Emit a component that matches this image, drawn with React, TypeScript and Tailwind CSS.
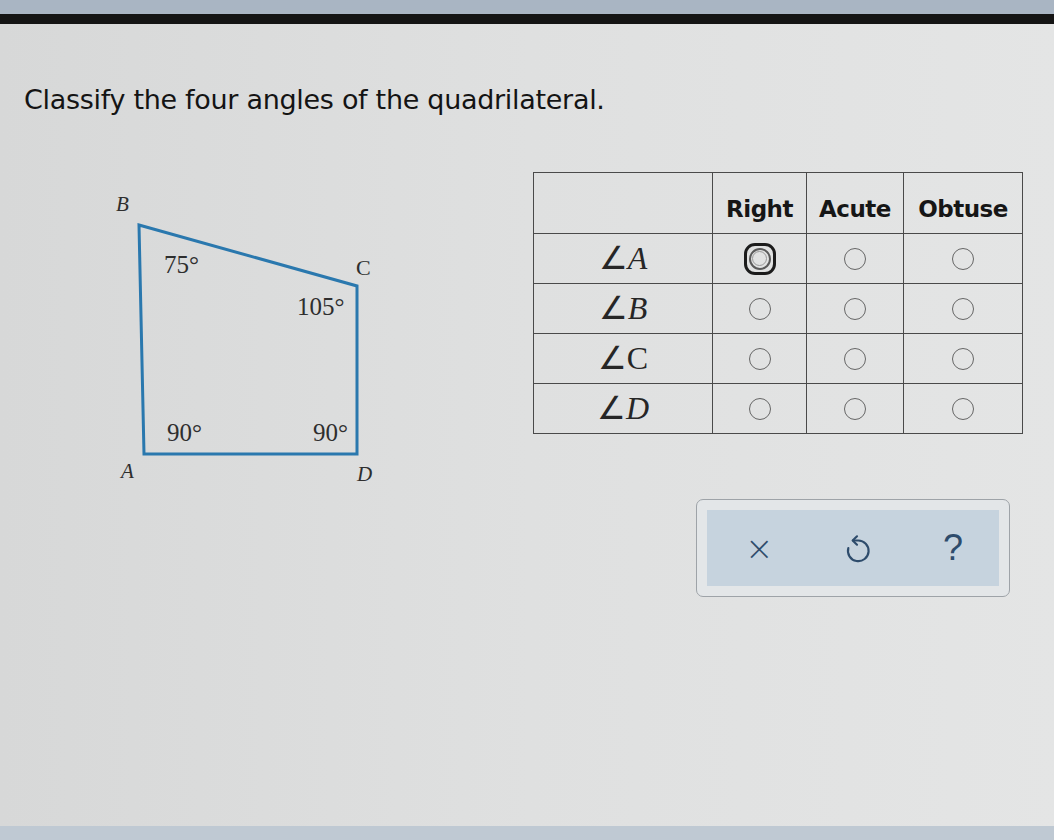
import React from 'react';

const rows = ['A', 'B', 'C', 'D'];

function Radio({ selected }: { selected?: boolean }) {
  if (selected) {
    return (
      <div className="mx-auto w-[32px] h-[32px] rounded-[11px] border-[3px] border-[#1c1c1c] flex items-center justify-center">
        <div className="w-[22px] h-[22px] rounded-full border-[2px] border-[#5a5a5a] flex items-center justify-center">
          <div className="w-[15px] h-[15px] rounded-full border border-[#9a9a9a]" />
        </div>
      </div>
    );
  }
  return <div className="mx-auto w-[22px] h-[22px] rounded-full border-[1.5px] border-[#666]" />;
}

function Figure() {
  return (
    <svg width="300" height="300" viewBox="100 190 300 300" className="shrink-0">
      <polygon
        points="139,228 357,289 357,457 144,457"
        fill="none"
        stroke="#2a78ae"
        strokeWidth="3"
        strokeLinejoin="miter"
      />
      <g fontFamily="'Liberation Serif', serif" fill="#2e2e2e">
        <text x="116" y="214" fontSize="21" fontStyle="italic">B</text>
        <text x="356" y="278" fontSize="22">C</text>
        <text x="121" y="481" fontSize="21" fontStyle="italic">A</text>
        <text x="357" y="484" fontSize="21" fontStyle="italic">D</text>
        <text x="164" y="276" fontSize="25">75°</text>
        <text x="297" y="318" fontSize="25">105°</text>
        <text x="167" y="444" fontSize="25">90°</text>
        <text x="313" y="444" fontSize="25">90°</text>
      </g>
    </svg>
  );
}

function UndoIcon() {
  return (
    <svg width="40" height="40" viewBox="0 0 24 24" fill="none" stroke="#2e4c6c" strokeWidth="1.3" strokeLinecap="round" strokeLinejoin="round">
      <path d="M9 7.5 H12 A6.2 6.2 0 1 1 6.2 12" />
      <path d="M11.4 5 L8.8 7.5 L11.4 10" />
    </svg>
  );
}

export default function App() {
  return (
    <div
      className="w-[1054px] h-[840px] overflow-hidden flex flex-col bg-gradient-to-r from-[#d7d8d8] via-[#dfe0e0] to-[#e4e5e5]"
      style={{ fontFamily: "'DejaVu Sans', Verdana, sans-serif" }}
    >
      <div className="h-[14px] bg-[#a9b5c3] shrink-0" />
      <div className="h-[10px] bg-[#141414] shrink-0" />

      <div className="flex-1 px-[24px]">
        <h1 className="mt-[60px] text-[27px] leading-[32px] text-[#141414] tracking-[-0.3px]">
          Classify the four angles of the quadrilateral.
        </h1>

        <div className="flex items-start mt-[56px]">
          <div className="ml-[76px] mt-[15px]">
            <Figure />
          </div>

          <div className="ml-[133px] flex flex-col">
            <table className="border-collapse border-[1.5px] border-[#3e3e3e] text-[#161616]">
              <thead>
                <tr className="h-[61px]">
                  <th className="w-[179px] border border-[#4a4a4a]" />
                  <th className="w-[94px] border border-[#4a4a4a] align-middle pt-[12px] text-[23px] font-bold tracking-[-0.5px]">Right</th>
                  <th className="w-[97px] border border-[#4a4a4a] align-middle pt-[12px] text-[23px] font-bold tracking-[-0.5px]">Acute</th>
                  <th className="w-[119px] border border-[#4a4a4a] align-middle pt-[12px] text-[23px] font-bold tracking-[-0.5px]">Obtuse</th>
                </tr>
              </thead>
              <tbody>
                {rows.map((r, i) => (
                  <tr key={r} className="h-[50px]">
                    <td className="border border-[#4a4a4a] text-center">
                      <span className="text-[32px] leading-none text-[#262626]" style={{ fontFamily: "'Liberation Serif', serif" }}>
                        ∠<span className={r === 'C' ? '' : 'italic'}>{r}</span>
                      </span>
                    </td>
                    <td className="border border-[#4a4a4a]"><Radio selected={i === 0} /></td>
                    <td className="border border-[#4a4a4a]"><Radio /></td>
                    <td className="border border-[#4a4a4a]"><Radio /></td>
                  </tr>
                ))}
              </tbody>
            </table>

            <div className="ml-[163px] mt-[65px] w-[314px] h-[98px] rounded-[7px] border-[1.5px] border-[#9ea3a8] bg-[#e3e6e8] p-[10px]">
              <div className="h-full bg-[#c6d3de] flex items-center justify-between pl-[38px] pr-[36px]">
                <span className="text-[34px] leading-none text-[#2e4c6c] font-light" style={{ fontFamily: "'DejaVu Sans', sans-serif" }}>×</span>
                <UndoIcon />
                <span className="text-[36px] leading-none text-[#2e4c6c]" style={{ fontFamily: "'Liberation Sans', sans-serif" }}>?</span>
              </div>
            </div>
          </div>
        </div>
      </div>

      <div className="h-[14px] bg-[#bfc9d3] shrink-0" />
    </div>
  );
}
